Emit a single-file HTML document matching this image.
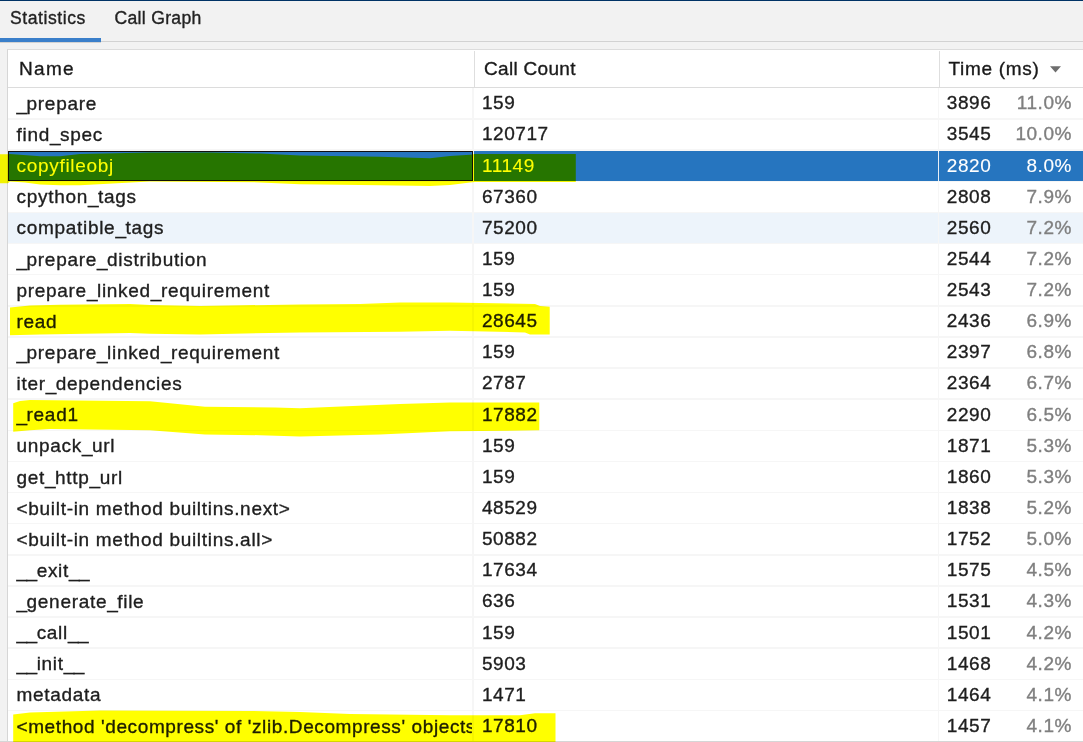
<!DOCTYPE html><html><head><meta charset="utf-8"><style>
*{margin:0;padding:0;box-sizing:border-box}
html,body{width:1083px;height:742px;overflow:hidden;background:#f2f2f2;position:relative;font-family:"Liberation Sans",sans-serif;}
.t{position:absolute;white-space:pre;font-size:19px;letter-spacing:0.55px;line-height:0;color:#1e1e1e;-webkit-text-stroke:0.35px currentColor}
.n{font-size:19px;letter-spacing:0.7px}
.a{position:absolute}
.p{color:#7f7f7f}
</style></head><body><div class="a" style="left:0;top:0;width:1083px;height:1px;background:#003366"></div>
<div class="t" style="left:10px;top:17.60px;font-size:17.6px;letter-spacing:0.55px;color:#222">Statistics</div>
<div class="t" style="left:114.5px;top:17.60px;font-size:17.6px;letter-spacing:0.3px;color:#222">Call Graph</div>
<div class="a" style="left:0;top:38px;width:101px;height:3.5px;background:#3a7fca"></div>
<div class="a" style="left:101px;top:40.5px;width:982px;height:1.3px;background:#d2d2d2"></div>
<div class="a" style="left:0;top:41.5px;width:101px;height:0.8px;background:#d2d2d2"></div>
<div class="a" style="left:7px;top:49px;width:1076px;height:693px;background:#fff;border-left:1px solid #d6d6d6;border-top:1px solid #dcdcdc"></div>
<div class="a" style="left:8px;top:87px;width:1075px;height:1.3px;background:#dcdcdc"></div>
<div class="a" style="left:473.5px;top:51px;width:1.3px;height:36px;background:#dedede"></div>
<div class="a" style="left:938.7px;top:51px;width:1.3px;height:36px;background:#dedede"></div>
<div class="t n" style="left:19px;top:68.92px;color:#1a1a1a;letter-spacing:1.3px">Name</div>
<div class="t n" style="left:484px;top:68.92px;color:#1a1a1a;letter-spacing:0.3px">Call Count</div>
<div class="t n" style="left:948.5px;top:68.92px;color:#1a1a1a">Time (ms)</div>
<svg class="a" style="left:1049px;top:65px" width="13" height="9"><path d="M1 1.2 L12 1.2 L6.5 7.5 Z" fill="#6e6e6e"/></svg>
<div class="a" style="left:8px;top:212.39px;width:1075px;height:31.13px;background:#edf4fb"></div>
<div class="a" style="left:8px;top:150.73px;width:1075px;height:30.53px;background:#2675bf"></div>
<div class="a" style="left:8px;top:118.25px;width:1075px;height:1.5px;background:#f6f6f6"></div>
<div class="a" style="left:8px;top:149.38px;width:1075px;height:1.5px;background:#f6f6f6"></div>
<div class="a" style="left:8px;top:180.51px;width:1075px;height:1.5px;background:#f6f6f6"></div>
<div class="a" style="left:8px;top:211.64px;width:1075px;height:1.5px;background:#f6f6f6"></div>
<div class="a" style="left:8px;top:242.77px;width:1075px;height:1.5px;background:#f6f6f6"></div>
<div class="a" style="left:8px;top:273.90px;width:1075px;height:1.5px;background:#f6f6f6"></div>
<div class="a" style="left:8px;top:305.03px;width:1075px;height:1.5px;background:#f6f6f6"></div>
<div class="a" style="left:8px;top:336.16px;width:1075px;height:1.5px;background:#f6f6f6"></div>
<div class="a" style="left:8px;top:367.29px;width:1075px;height:1.5px;background:#f6f6f6"></div>
<div class="a" style="left:8px;top:398.42px;width:1075px;height:1.5px;background:#f6f6f6"></div>
<div class="a" style="left:8px;top:429.55px;width:1075px;height:1.5px;background:#f6f6f6"></div>
<div class="a" style="left:8px;top:460.68px;width:1075px;height:1.5px;background:#f6f6f6"></div>
<div class="a" style="left:8px;top:491.81px;width:1075px;height:1.5px;background:#f6f6f6"></div>
<div class="a" style="left:8px;top:522.94px;width:1075px;height:1.5px;background:#f6f6f6"></div>
<div class="a" style="left:8px;top:554.07px;width:1075px;height:1.5px;background:#f6f6f6"></div>
<div class="a" style="left:8px;top:585.20px;width:1075px;height:1.5px;background:#f6f6f6"></div>
<div class="a" style="left:8px;top:616.33px;width:1075px;height:1.5px;background:#f6f6f6"></div>
<div class="a" style="left:8px;top:647.46px;width:1075px;height:1.5px;background:#f6f6f6"></div>
<div class="a" style="left:8px;top:678.59px;width:1075px;height:1.5px;background:#f6f6f6"></div>
<div class="a" style="left:8px;top:709.72px;width:1075px;height:1.5px;background:#f6f6f6"></div>
<div class="a" style="left:8px;top:740.85px;width:1075px;height:1.5px;background:#f6f6f6"></div>
<div class="a" style="left:472.2px;top:88px;width:1.5px;height:654px;background:#f6f6f6"></div>
<div class="a" style="left:937.7px;top:88px;width:1.5px;height:654px;background:#f6f6f6"></div>
<div class="a" style="left:938px;top:150.73px;width:1.3px;height:30.53px;background:#e8eef5"></div>
<div class="a" style="left:8px;top:151px;width:465px;height:30px;border:1.5px solid #111"></div>
<div class="a" style="left:16px;top:87.87px;width:456px;height:31.13px;overflow:hidden"><div class="t n" style="left:0.5px;top:16.12px;color:#1e1e1e;"><span style="letter-spacing:-0.5px">_</span>prepare</div></div>
<div class="t" style="left:482px;top:103.29px;color:#1e1e1e;">159</div>
<div class="t" style="left:946.8px;top:103.29px;color:#1e1e1e;">3896</div>
<div class="t" style="right:11px;top:103.29px;color:#7f7f7f;text-align:right;">11.0%</div>
<div class="a" style="left:16px;top:119.00px;width:456px;height:31.13px;overflow:hidden"><div class="t n" style="left:0.5px;top:16.12px;color:#1e1e1e;">find<span style="letter-spacing:-0.5px">_</span>spec</div></div>
<div class="t" style="left:482px;top:134.42px;color:#1e1e1e;">120717</div>
<div class="t" style="left:946.8px;top:134.42px;color:#1e1e1e;">3545</div>
<div class="t" style="right:11px;top:134.42px;color:#7f7f7f;text-align:right;">10.0%</div>
<div class="a" style="left:16px;top:150.13px;width:456px;height:31.13px;overflow:hidden"><div class="t n" style="left:0.5px;top:16.12px;color:#ffffff;-webkit-text-stroke:0.1px currentColor;">copyfileobj</div></div>
<div class="t" style="left:482px;top:165.55px;color:#ffffff;-webkit-text-stroke:0.1px currentColor;">11149</div>
<div class="t" style="left:946.8px;top:165.55px;color:#ffffff;-webkit-text-stroke:0.1px currentColor;">2820</div>
<div class="t" style="right:11px;top:165.55px;color:#ffffff;text-align:right;-webkit-text-stroke:0.1px currentColor;">8.0%</div>
<div class="a" style="left:16px;top:181.26px;width:456px;height:31.13px;overflow:hidden"><div class="t n" style="left:0.5px;top:16.12px;color:#1e1e1e;">cpython<span style="letter-spacing:-0.5px">_</span>tags</div></div>
<div class="t" style="left:482px;top:196.68px;color:#1e1e1e;">67360</div>
<div class="t" style="left:946.8px;top:196.68px;color:#1e1e1e;">2808</div>
<div class="t" style="right:11px;top:196.68px;color:#7f7f7f;text-align:right;">7.9%</div>
<div class="a" style="left:16px;top:212.39px;width:456px;height:31.13px;overflow:hidden"><div class="t n" style="left:0.5px;top:16.12px;color:#1e1e1e;">compatible<span style="letter-spacing:-0.5px">_</span>tags</div></div>
<div class="t" style="left:482px;top:227.81px;color:#1e1e1e;">75200</div>
<div class="t" style="left:946.8px;top:227.81px;color:#1e1e1e;">2560</div>
<div class="t" style="right:11px;top:227.81px;color:#7f7f7f;text-align:right;">7.2%</div>
<div class="a" style="left:16px;top:243.52px;width:456px;height:31.13px;overflow:hidden"><div class="t n" style="left:0.5px;top:16.12px;color:#1e1e1e;"><span style="letter-spacing:-0.5px">_</span>prepare<span style="letter-spacing:-0.5px">_</span>distribution</div></div>
<div class="t" style="left:482px;top:258.94px;color:#1e1e1e;">159</div>
<div class="t" style="left:946.8px;top:258.94px;color:#1e1e1e;">2544</div>
<div class="t" style="right:11px;top:258.94px;color:#7f7f7f;text-align:right;">7.2%</div>
<div class="a" style="left:16px;top:274.65px;width:456px;height:31.13px;overflow:hidden"><div class="t n" style="left:0.5px;top:16.12px;color:#1e1e1e;">prepare<span style="letter-spacing:-0.5px">_</span>linked<span style="letter-spacing:-0.5px">_</span>requirement</div></div>
<div class="t" style="left:482px;top:290.07px;color:#1e1e1e;">159</div>
<div class="t" style="left:946.8px;top:290.07px;color:#1e1e1e;">2543</div>
<div class="t" style="right:11px;top:290.07px;color:#7f7f7f;text-align:right;">7.2%</div>
<div class="a" style="left:16px;top:305.78px;width:456px;height:31.13px;overflow:hidden"><div class="t n" style="left:0.5px;top:16.12px;color:#1e1e1e;">read</div></div>
<div class="t" style="left:482px;top:321.20px;color:#1e1e1e;">28645</div>
<div class="t" style="left:946.8px;top:321.20px;color:#1e1e1e;">2436</div>
<div class="t" style="right:11px;top:321.20px;color:#7f7f7f;text-align:right;">6.9%</div>
<div class="a" style="left:16px;top:336.91px;width:456px;height:31.13px;overflow:hidden"><div class="t n" style="left:0.5px;top:16.12px;color:#1e1e1e;"><span style="letter-spacing:-0.5px">_</span>prepare<span style="letter-spacing:-0.5px">_</span>linked<span style="letter-spacing:-0.5px">_</span>requirement</div></div>
<div class="t" style="left:482px;top:352.33px;color:#1e1e1e;">159</div>
<div class="t" style="left:946.8px;top:352.33px;color:#1e1e1e;">2397</div>
<div class="t" style="right:11px;top:352.33px;color:#7f7f7f;text-align:right;">6.8%</div>
<div class="a" style="left:16px;top:368.04px;width:456px;height:31.13px;overflow:hidden"><div class="t n" style="left:0.5px;top:16.12px;color:#1e1e1e;">iter<span style="letter-spacing:-0.5px">_</span>dependencies</div></div>
<div class="t" style="left:482px;top:383.46px;color:#1e1e1e;">2787</div>
<div class="t" style="left:946.8px;top:383.46px;color:#1e1e1e;">2364</div>
<div class="t" style="right:11px;top:383.46px;color:#7f7f7f;text-align:right;">6.7%</div>
<div class="a" style="left:16px;top:399.17px;width:456px;height:31.13px;overflow:hidden"><div class="t n" style="left:0.5px;top:16.12px;color:#1e1e1e;"><span style="letter-spacing:-0.5px">_</span>read1</div></div>
<div class="t" style="left:482px;top:414.59px;color:#1e1e1e;">17882</div>
<div class="t" style="left:946.8px;top:414.59px;color:#1e1e1e;">2290</div>
<div class="t" style="right:11px;top:414.59px;color:#7f7f7f;text-align:right;">6.5%</div>
<div class="a" style="left:16px;top:430.30px;width:456px;height:31.13px;overflow:hidden"><div class="t n" style="left:0.5px;top:16.12px;color:#1e1e1e;">unpack<span style="letter-spacing:-0.5px">_</span>url</div></div>
<div class="t" style="left:482px;top:445.72px;color:#1e1e1e;">159</div>
<div class="t" style="left:946.8px;top:445.72px;color:#1e1e1e;">1871</div>
<div class="t" style="right:11px;top:445.72px;color:#7f7f7f;text-align:right;">5.3%</div>
<div class="a" style="left:16px;top:461.43px;width:456px;height:31.13px;overflow:hidden"><div class="t n" style="left:0.5px;top:16.12px;color:#1e1e1e;">get<span style="letter-spacing:-0.5px">_</span>http<span style="letter-spacing:-0.5px">_</span>url</div></div>
<div class="t" style="left:482px;top:476.85px;color:#1e1e1e;">159</div>
<div class="t" style="left:946.8px;top:476.85px;color:#1e1e1e;">1860</div>
<div class="t" style="right:11px;top:476.85px;color:#7f7f7f;text-align:right;">5.3%</div>
<div class="a" style="left:16px;top:492.56px;width:456px;height:31.13px;overflow:hidden"><div class="t n" style="left:0.5px;top:16.12px;color:#1e1e1e;">&lt;built-in method builtins.next&gt;</div></div>
<div class="t" style="left:482px;top:507.98px;color:#1e1e1e;">48529</div>
<div class="t" style="left:946.8px;top:507.98px;color:#1e1e1e;">1838</div>
<div class="t" style="right:11px;top:507.98px;color:#7f7f7f;text-align:right;">5.2%</div>
<div class="a" style="left:16px;top:523.69px;width:456px;height:31.13px;overflow:hidden"><div class="t n" style="left:0.5px;top:16.12px;color:#1e1e1e;">&lt;built-in method builtins.all&gt;</div></div>
<div class="t" style="left:482px;top:539.11px;color:#1e1e1e;">50882</div>
<div class="t" style="left:946.8px;top:539.11px;color:#1e1e1e;">1752</div>
<div class="t" style="right:11px;top:539.11px;color:#7f7f7f;text-align:right;">5.0%</div>
<div class="a" style="left:16px;top:554.82px;width:456px;height:31.13px;overflow:hidden"><div class="t n" style="left:0.5px;top:16.12px;color:#1e1e1e;"><span style="letter-spacing:-0.5px">_</span><span style="letter-spacing:-0.5px">_</span>exit<span style="letter-spacing:-0.5px">_</span><span style="letter-spacing:-0.5px">_</span></div></div>
<div class="t" style="left:482px;top:570.24px;color:#1e1e1e;">17634</div>
<div class="t" style="left:946.8px;top:570.24px;color:#1e1e1e;">1575</div>
<div class="t" style="right:11px;top:570.24px;color:#7f7f7f;text-align:right;">4.5%</div>
<div class="a" style="left:16px;top:585.95px;width:456px;height:31.13px;overflow:hidden"><div class="t n" style="left:0.5px;top:16.12px;color:#1e1e1e;"><span style="letter-spacing:-0.5px">_</span>generate<span style="letter-spacing:-0.5px">_</span>file</div></div>
<div class="t" style="left:482px;top:601.37px;color:#1e1e1e;">636</div>
<div class="t" style="left:946.8px;top:601.37px;color:#1e1e1e;">1531</div>
<div class="t" style="right:11px;top:601.37px;color:#7f7f7f;text-align:right;">4.3%</div>
<div class="a" style="left:16px;top:617.08px;width:456px;height:31.13px;overflow:hidden"><div class="t n" style="left:0.5px;top:16.12px;color:#1e1e1e;"><span style="letter-spacing:-0.5px">_</span><span style="letter-spacing:-0.5px">_</span>call<span style="letter-spacing:-0.5px">_</span><span style="letter-spacing:-0.5px">_</span></div></div>
<div class="t" style="left:482px;top:632.50px;color:#1e1e1e;">159</div>
<div class="t" style="left:946.8px;top:632.50px;color:#1e1e1e;">1501</div>
<div class="t" style="right:11px;top:632.50px;color:#7f7f7f;text-align:right;">4.2%</div>
<div class="a" style="left:16px;top:648.21px;width:456px;height:31.13px;overflow:hidden"><div class="t n" style="left:0.5px;top:16.12px;color:#1e1e1e;"><span style="letter-spacing:-0.5px">_</span><span style="letter-spacing:-0.5px">_</span>init<span style="letter-spacing:-0.5px">_</span><span style="letter-spacing:-0.5px">_</span></div></div>
<div class="t" style="left:482px;top:663.63px;color:#1e1e1e;">5903</div>
<div class="t" style="left:946.8px;top:663.63px;color:#1e1e1e;">1468</div>
<div class="t" style="right:11px;top:663.63px;color:#7f7f7f;text-align:right;">4.2%</div>
<div class="a" style="left:16px;top:679.34px;width:456px;height:31.13px;overflow:hidden"><div class="t n" style="left:0.5px;top:16.12px;color:#1e1e1e;">metadata</div></div>
<div class="t" style="left:482px;top:694.76px;color:#1e1e1e;">1471</div>
<div class="t" style="left:946.8px;top:694.76px;color:#1e1e1e;">1464</div>
<div class="t" style="right:11px;top:694.76px;color:#7f7f7f;text-align:right;">4.1%</div>
<div class="a" style="left:16px;top:710.47px;width:456px;height:31.13px;overflow:hidden"><div class="t n" style="left:0.5px;top:16.12px;color:#1e1e1e;letter-spacing:0.6px;">&lt;method &#x27;decompress&#x27; of &#x27;zlib.Decompress&#x27; objects&gt;</div></div>
<div class="t" style="left:482px;top:725.89px;color:#1e1e1e;">17810</div>
<div class="t" style="left:946.8px;top:725.89px;color:#1e1e1e;">1457</div>
<div class="t" style="right:11px;top:725.89px;color:#7f7f7f;text-align:right;">4.1%</div>
<div class="a" style="left:0;top:740.5px;width:1083px;height:1.5px;background:#d6d6d6"></div>
<svg class="a" style="left:0;top:0;mix-blend-mode:multiply" width="1083" height="742"><path d="M0.00 154.30 L8.00 154.30 L10.00 154.00 L20.00 154.70 L40.00 156.20 L60.00 156.20 L80.00 153.90 L150.00 152.50 L210.00 152.60 L260.00 153.60 L300.00 155.40 L380.00 156.80 L430.00 158.20 L450.00 156.00 L470.00 154.70 L475.00 154.00 L575.80 154.00 L575.80 182.10 L475.00 182.10 L470.00 182.60 L450.00 185.00 L430.00 185.90 L380.00 185.20 L300.00 184.30 L260.00 182.40 L150.00 181.50 L80.00 185.30 L60.00 185.30 L40.00 184.40 L25.00 182.60 L10.00 181.50 L8.00 183.20 L0.00 183.20 Z" fill="#ffff00"/><path d="M10.00 307.50 L30.00 305.40 L60.00 304.70 L130.00 304.00 L150.00 305.00 L200.00 306.00 L300.00 304.40 L360.00 304.00 L400.00 302.60 L450.00 302.40 L535.00 304.00 L540.00 306.00 L549.70 306.80 L549.70 334.50 L530.00 334.50 L525.00 332.40 L450.00 330.70 L400.00 331.70 L300.00 332.40 L200.00 334.50 L150.00 333.80 L130.00 333.10 L40.00 334.50 L10.00 335.20 Z" fill="#ffff00"/><path d="M13.20 403.30 L20.00 401.00 L30.00 400.00 L150.00 401.20 L205.00 406.80 L275.00 407.50 L300.00 408.20 L400.00 404.00 L450.00 402.60 L539.30 402.60 L539.30 430.30 L450.00 431.30 L380.00 434.50 L300.00 436.50 L260.00 435.20 L205.00 434.50 L150.00 430.30 L50.00 429.00 L30.00 430.30 L13.20 431.70 Z" fill="#ffff00"/><path d="M13.20 714.50 L30.00 712.50 L100.00 710.40 L250.00 711.00 L300.00 712.00 L350.00 713.90 L450.00 715.20 L520.00 715.20 L535.00 713.20 L555.50 713.20 L555.50 742.00 L13.20 742.00 Z" fill="#ffff00"/></svg></body></html>
